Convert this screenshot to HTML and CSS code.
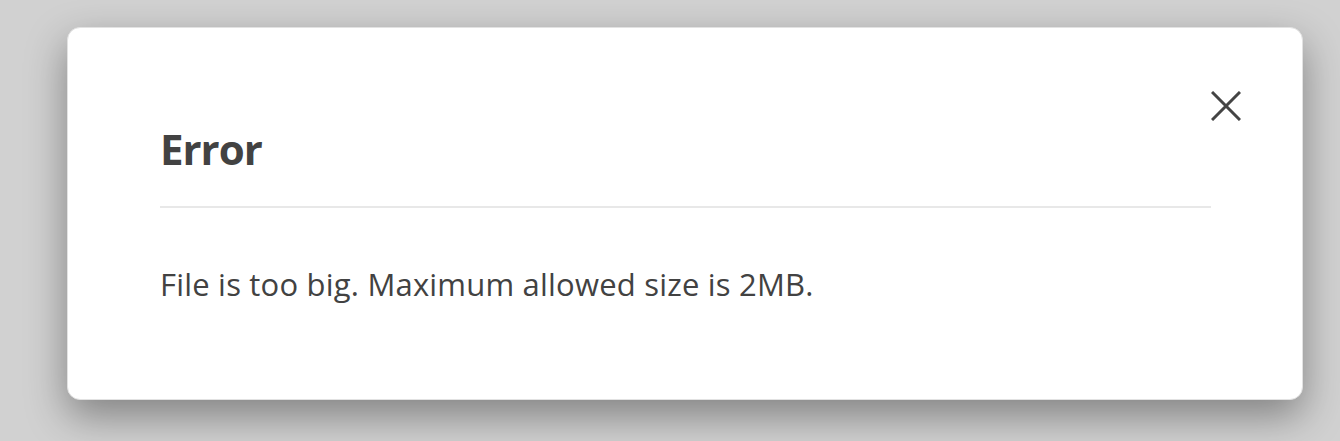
FILE: index.html
```html
<!DOCTYPE html>
<html lang="en">
<head>
<meta charset="utf-8">
<title>Error</title>
<link rel="stylesheet" href="styles.css">
</head>
<body>
<div class="overlay">
  <div class="modal" role="dialog" aria-labelledby="modal-title">
    <button class="close" type="button" aria-label="Close">
      <svg viewBox="0 0 30 30" width="30" height="30" aria-hidden="true">
        <path d="M1 1 L29 29 M29 1 L1 29" stroke="#444" stroke-width="3" fill="none"/>
      </svg>
    </button>
    <h2 class="modal-title" id="modal-title">Error</h2>
    <p class="modal-body">File is too big. Maximum allowed size is 2MB.</p>
  </div>
</div>
</body>
</html>
```

FILE: styles.css
```css
html, body {
  margin: 0;
  padding: 0;
  height: 100%;
  background: #d1d1d1;
  overflow: hidden;
}

.overlay {
  padding: 27px 0 0 67px;
}

.modal {
  position: relative;
  box-sizing: border-box;
  width: 1236px;
  height: 373px;
  background: #ffffff;
  border: 1px solid #e2e2e2;
  border-radius: 13px;
  box-shadow: 0 16px 40px rgba(0, 0, 0, 0.38);
  padding: 94px 91px 0 92px;
  font-family: "Open Sans", "Liberation Sans", sans-serif;
  color: #424242;
}

.close {
  position: absolute;
  top: 63px;
  right: 61px;
  width: 30px;
  height: 30px;
  padding: 0;
  border: 0;
  background: none;
  cursor: pointer;
  display: block;
}

.close svg {
  display: block;
}

.modal-title {
  margin: 0;
  font-size: 42px;
  line-height: 53px;
  font-weight: 700;
  letter-spacing: -1px;
  padding-bottom: 31px;
  border-bottom: 2px solid #e8e8e8;
}

.modal-body {
  margin: 58px 0 0;
  font-size: 31px;
  line-height: 37px;
  font-weight: 400;
  letter-spacing: 0.2px;
}
```
